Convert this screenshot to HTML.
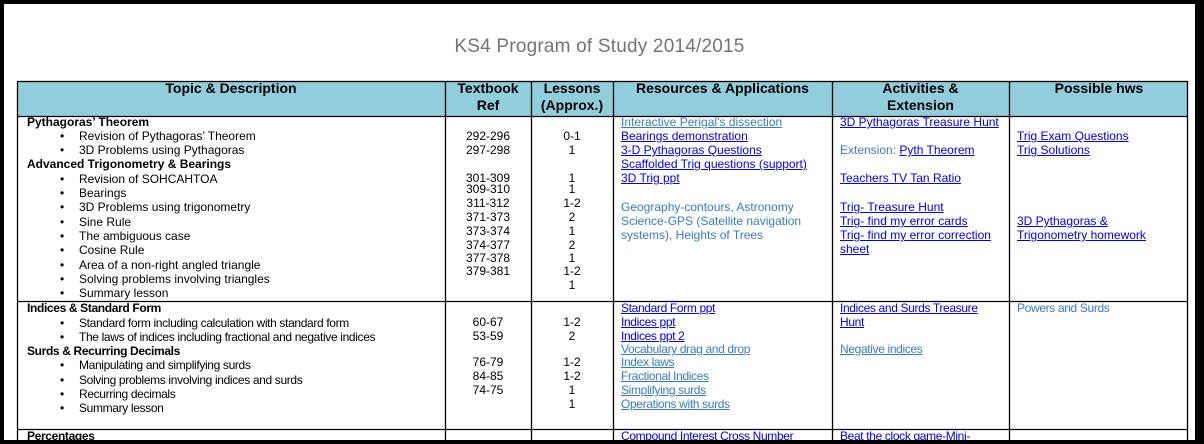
<!DOCTYPE html>
<html><head><meta charset="utf-8"><style>
body{margin:0;width:1204px;height:444px;overflow:hidden;background:#000;position:relative;font-family:"Liberation Sans",Arial,sans-serif;}
#pg{position:absolute;left:4px;top:4px;width:1191px;height:436px;background:#fff;overflow:hidden}
.t{position:absolute;font-size:12px;line-height:14px;white-space:nowrap;color:#000}
.b{font-weight:bold}
.c{transform:translateX(-50%)}
.l{color:#0000ee;text-decoration:underline}
.m{color:#3a7cc4}
.mu{color:#3a7cc4;text-decoration:underline}
.hd{position:absolute;font-weight:bold;font-size:14px;line-height:17px;text-align:center}
.n{letter-spacing:-0.35px}
</style></head><body><div id="pg">
<div style="position:absolute;left:0;width:1191px;top:32px;text-align:center;font-size:19px;color:#757575;letter-spacing:0.2px">KS4 Program of Study 2014/2015</div>
<div style="position:absolute;left:13px;top:77px;width:1171px;height:36px;background:#92cddc"></div>
<svg style="position:absolute;left:0;top:0" width="1191" height="436">
<g stroke="#000" stroke-width="1.3" fill="none">
<rect x="13.5" y="77.5" width="1170" height="370"/>
<line x1="13" y1="112.5" x2="1184" y2="112.5"/>
<line x1="13" y1="297.5" x2="1184" y2="297.5"/>
<line x1="13" y1="425.5" x2="1184" y2="425.5"/>
<line x1="441.5" y1="77" x2="441.5" y2="440"/>
<line x1="527.5" y1="77" x2="527.5" y2="440"/>
<line x1="609.5" y1="77" x2="609.5" y2="440"/>
<line x1="828.5" y1="77" x2="828.5" y2="440"/>
<line x1="1005.5" y1="77" x2="1005.5" y2="440"/>
</g></svg>
<div class="hd" style="left:13px;width:428px;top:76px">Topic &amp; Description</div>
<div class="hd" style="left:441px;width:86px;top:76px">Textbook<br>Ref</div>
<div class="hd" style="left:527px;width:82px;top:76px">Lessons<br>(Approx.)</div>
<div class="hd" style="left:609px;width:219px;top:76px">Resources &amp; Applications</div>
<div class="hd" style="left:828px;width:177px;top:76px">Activities &amp;<br>Extension</div>
<div class="hd" style="left:1005px;width:180px;top:76px">Possible hws</div>

<div class="t b" style="left:23px;top:111px">Pythagoras’ Theorem</div>
<div class="t" style="left:56px;top:125px">•</div><div class="t" style="left:75px;top:125px">Revision of Pythagoras’ Theorem</div>
<div class="t" style="left:56px;top:139px">•</div><div class="t" style="left:75px;top:139px">3D Problems using Pythagoras</div>
<div class="t b" style="left:23px;top:153px">Advanced Trigonometry &amp; Bearings</div>
<div class="t" style="left:56px;top:168px">•</div><div class="t" style="left:75px;top:168px">Revision of SOHCAHTOA</div>
<div class="t" style="left:56px;top:182px">•</div><div class="t" style="left:75px;top:182px">Bearings</div>
<div class="t" style="left:56px;top:196px">•</div><div class="t" style="left:75px;top:196px">3D Problems using trigonometry</div>
<div class="t" style="left:56px;top:211px">•</div><div class="t" style="left:75px;top:211px">Sine Rule</div>
<div class="t" style="left:56px;top:225px">•</div><div class="t" style="left:75px;top:225px">The ambiguous case</div>
<div class="t" style="left:56px;top:239px">•</div><div class="t" style="left:75px;top:239px">Cosine Rule</div>
<div class="t" style="left:56px;top:254px">•</div><div class="t" style="left:75px;top:254px">Area of a non-right angled triangle</div>
<div class="t" style="left:56px;top:268px">•</div><div class="t" style="left:75px;top:268px">Solving problems involving triangles</div>
<div class="t" style="left:56px;top:282px">•</div><div class="t" style="left:75px;top:282px">Summary lesson</div>

<div class="t c" style="left:484px;top:125px">292-296</div>
<div class="t c" style="left:484px;top:139px">297-298</div>
<div class="t c" style="left:484px;top:167px">301-309</div>
<div class="t c" style="left:484px;top:178px">309-310</div>
<div class="t c" style="left:484px;top:192px">311-312</div>
<div class="t c" style="left:484px;top:206px">371-373</div>
<div class="t c" style="left:484px;top:220px">373-374</div>
<div class="t c" style="left:484px;top:234px">374-377</div>
<div class="t c" style="left:484px;top:247px">377-378</div>
<div class="t c" style="left:484px;top:260px">379-381</div>
<div class="t c" style="left:568px;top:125px">0-1</div>
<div class="t c" style="left:568px;top:139px">1</div>
<div class="t c" style="left:568px;top:167px">1</div>
<div class="t c" style="left:568px;top:178px">1</div>
<div class="t c" style="left:568px;top:192px">1-2</div>
<div class="t c" style="left:568px;top:206px">2</div>
<div class="t c" style="left:568px;top:220px">1</div>
<div class="t c" style="left:568px;top:234px">2</div>
<div class="t c" style="left:568px;top:247px">1</div>
<div class="t c" style="left:568px;top:260px">1-2</div>
<div class="t c" style="left:568px;top:274px">1</div>

<div class="t mu" style="left:617px;top:111px">Interactive Perigal’s dissection</div>
<div class="t l" style="left:617px;top:125px">Bearings demonstration</div>
<div class="t l" style="left:617px;top:139px">3-D Pythagoras Questions</div>
<div class="t l" style="left:617px;top:153px">Scaffolded Trig questions (support)</div>
<div class="t l" style="left:617px;top:167px">3D Trig ppt</div>
<div class="t m" style="left:617px;top:196px">Geography-contours, Astronomy</div>
<div class="t m" style="left:617px;top:210px">Science-GPS (Satellite navigation</div>
<div class="t m" style="left:617px;top:224px">systems), Heights of Trees</div>

<div class="t l" style="left:836px;top:111px">3D Pythagoras Treasure Hunt</div>
<div class="t" style="left:836px;top:139px"><span class="m">Extension: </span><span class="l">Pyth Theorem</span></div>
<div class="t l" style="left:836px;top:167px">Teachers TV Tan Ratio</div>
<div class="t l" style="left:836px;top:196px">Trig- Treasure Hunt</div>
<div class="t l" style="left:836px;top:210px">Trig- find my error cards</div>
<div class="t l" style="left:836px;top:224px">Trig- find my error correction</div>
<div class="t l" style="left:836px;top:238px">sheet</div>

<div class="t l" style="left:1013px;top:125px">Trig Exam Questions</div>
<div class="t l" style="left:1013px;top:139px">Trig Solutions</div>
<div class="t l" style="left:1013px;top:210px">3D Pythagoras &amp;</div>
<div class="t l" style="left:1013px;top:224px">Trigonometry homework</div>

<div class="t b n" style="left:23px;top:297px">Indices &amp;  Standard Form</div>
<div class="t" style="left:56px;top:312px">•</div><div class="t n" style="left:75px;top:312px">Standard form including calculation with standard form</div>
<div class="t" style="left:56px;top:326px">•</div><div class="t n" style="left:75px;top:326px">The laws of indices including fractional and negative indices</div>
<div class="t b n" style="left:23px;top:340px">Surds &amp; Recurring Decimals</div>
<div class="t" style="left:56px;top:354px">•</div><div class="t n" style="left:75px;top:354px">Manipulating and simplifying surds</div>
<div class="t" style="left:56px;top:369px">•</div><div class="t n" style="left:75px;top:369px">Solving problems involving indices and surds</div>
<div class="t" style="left:56px;top:383px">•</div><div class="t n" style="left:75px;top:383px">Recurring decimals</div>
<div class="t" style="left:56px;top:397px">•</div><div class="t n" style="left:75px;top:397px">Summary lesson</div>

<div class="t c" style="left:484px;top:311px">60-67</div>
<div class="t c" style="left:484px;top:325px">53-59</div>
<div class="t c" style="left:484px;top:351px">76-79</div>
<div class="t c" style="left:484px;top:365px">84-85</div>
<div class="t c" style="left:484px;top:379px">74-75</div>
<div class="t c" style="left:568px;top:311px">1-2</div>
<div class="t c" style="left:568px;top:325px">2</div>
<div class="t c" style="left:568px;top:351px">1-2</div>
<div class="t c" style="left:568px;top:365px">1-2</div>
<div class="t c" style="left:568px;top:379px">1</div>
<div class="t c" style="left:568px;top:393px">1</div>

<div class="t l n" style="left:617px;top:297px">Standard Form ppt</div>
<div class="t l n" style="left:617px;top:311px">Indices ppt</div>
<div class="t l n" style="left:617px;top:325px">Indices ppt 2</div>
<div class="t mu n" style="left:617px;top:338px">Vocabulary drag and drop</div>
<div class="t mu n" style="left:617px;top:351px">Index laws</div>
<div class="t mu n" style="left:617px;top:365px">Fractional Indices</div>
<div class="t mu n" style="left:617px;top:379px">Simplifying surds</div>
<div class="t mu n" style="left:617px;top:393px">Operations with surds</div>

<div class="t l n" style="left:836px;top:297px">Indices and Surds Treasure</div>
<div class="t l n" style="left:836px;top:311px">Hunt</div>
<div class="t mu n" style="left:836px;top:338px">Negative indices</div>
<div class="t m n" style="left:1013px;top:297px">Powers and Surds</div>

<div class="t b n" style="left:23px;top:425px">Percentages</div>
<div class="t l n" style="left:617px;top:425px">Compound Interest Cross Number</div>
<div class="t l n" style="left:836px;top:425px">Beat the clock game-Mini-</div>
</div></body></html>
